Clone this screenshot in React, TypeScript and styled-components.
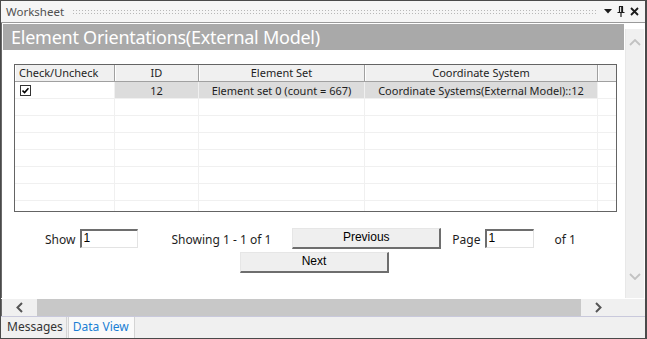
import styled, { createGlobalStyle } from 'styled-components'

const GlobalStyle = createGlobalStyle`
  html, body {
    margin: 0;
    padding: 0;
    background: #ffffff;
  }
  body {
    font-family: "Noto Sans", "Open Sans", sans-serif;
  }
`

const Frame = styled.div`
  width: 647px;
  height: 339px;
  box-sizing: border-box;
  border: 1px solid #4a4a4a;
  border-right-width: 2px;
  display: flex;
  flex-direction: column;
  background: #ffffff;
  overflow: hidden;
`

const TitleBar = styled.div`
  height: 21px;
  flex: none;
  display: flex;
  align-items: center;
  padding: 0 6px 0 5px;
  background: #f5f5f5;
  border-bottom: 1px solid #9a9a9a;
  gap: 4px;
`

const TitleText = styled.span`
  font-size: 11.5px;
  color: #505050;
`

const Dots = styled.div`
  flex: 1;
  height: 5px;
  margin: 0 2px 0 4px;
  background-image: radial-gradient(circle, #b8b8b8 0.6px, transparent 0.8px);
  background-size: 3px 3px;
`

const TitleIcons = styled.div`
  display: flex;
  align-items: center;
  gap: 5px;
  svg {
    display: block;
  }
`

const Body = styled.div`
  flex: 1;
  display: flex;
  min-height: 0;
  border-left: 1px solid #6a6a6a;
  padding-left: 1px;
`

const Main = styled.div`
  flex: 1;
  display: flex;
  flex-direction: column;
  padding-top: 1px;
`

const Banner = styled.div`
  height: 26px;
  margin-right: 1px;
  background: #a9a9a9;
  color: #ffffff;
  font-size: 18px;
  line-height: 26px;
  padding-left: 8px;
  letter-spacing: -0.25px;
`

const TableBox = styled.div`
  margin: 14px 0 0 11px;
  width: 603px;
  height: 148px;
  flex: none;
  box-sizing: border-box;
  border: 1px solid #646464;
  overflow: hidden;
`

const Row = styled.div`
  display: grid;
  grid-template-columns: 100px 84px 166px 233px 1fr;
  height: 17px;
`

const HeadCell = styled.div<{ $left?: boolean }>`
  background: #f0f0f0;
  border-right: 1px solid #a0a0a0;
  border-bottom: 1px solid #a0a0a0;
  box-shadow: inset 1px 0 0 #ffffff;
  font-size: 11px;
  line-height: 16px;
  color: #1e1e1e;
  text-align: ${(p) => (p.$left ? 'left' : 'center')};
  padding-left: ${(p) => (p.$left ? '4px' : '0')};
  white-space: nowrap;
  overflow: hidden;
  &:last-child {
    border-right: none;
  }
`

const Cell = styled.div<{ $shade?: boolean }>`
  background: ${(p) => (p.$shade ? '#dcdcdc' : '#ffffff')};
  border-right: 1px solid #f0f0f0;
  border-bottom: 1px solid #f0f0f0;
  font-size: 11px;
  line-height: 17px;
  color: #1e1e1e;
  white-space: nowrap;
  overflow: hidden;
  display: flex;
  align-items: center;
  justify-content: center;
  &:first-child {
    justify-content: flex-start;
    padding-left: 5px;
  }
  &:last-child {
    border-right: none;
  }
`

const CheckBox = styled.span`
  width: 9px;
  height: 9px;
  border: 1px solid #333333;
  background: #ffffff;
  display: inline-flex;
  align-items: center;
  justify-content: center;
`

const Pager = styled.div`
  display: flex;
  flex-direction: column;
  padding-top: 16px;
`

const PagerRow = styled.div<{ $mt?: number }>`
  display: flex;
  align-items: center;
  height: 20px;
  margin-top: ${(p) => p.$mt ?? 0}px;
`

const Label = styled.span<{ $ml: number }>`
  margin-left: ${(p) => p.$ml}px;
  font-size: 12px;
  color: #1e1e1e;
  padding-top: 3px;
`

const Field = styled.div<{ $w: number; $ml: number }>`
  width: ${(p) => p.$w}px;
  height: 19px;
  margin-left: ${(p) => p.$ml}px;
  box-sizing: border-box;
  border-top: 2px solid #6e6e6e;
  border-left: 2px solid #6e6e6e;
  border-right: 1px solid #e3e3e3;
  border-bottom: 1px solid #e3e3e3;
  font-family: "Liberation Sans", Arial, sans-serif;
  font-size: 12px;
  line-height: 15px;
  padding-left: 1px;
  color: #000000;
`

const Button = styled.div<{ $ml: number }>`
  width: 149px;
  height: 21px;
  margin-left: ${(p) => p.$ml}px;
  box-sizing: border-box;
  background: #efefef;
  border-top: 1px solid #e6e6e6;
  border-left: 1px solid #e6e6e6;
  border-right: 2px solid #6e6e6e;
  border-bottom: 2px solid #6e6e6e;
  font-family: "Liberation Sans", Arial, sans-serif;
  font-size: 12px;
  line-height: 17px;
  text-align: center;
  color: #000000;
`

const VScroll = styled.div`
  width: 18px;
  flex: none;
  margin-top: 6px;
  margin-right: 1px;
  background: #f0f0f0;
  display: flex;
  flex-direction: column;
  justify-content: space-between;
  align-items: center;
  padding: 10px 0 18px;
  border-left: 1px solid #e8e8e8;
`

const HScroll = styled.div`
  height: 17px;
  flex: none;
  display: flex;
  align-items: center;
  background: #f0f0f0;
  border-left: 1px solid #6a6a6a;
  margin-top: 1px;
`

const Arrow = styled.div`
  width: 35px;
  display: flex;
  justify-content: center;
  align-items: center;
  height: 100%;
`

const Thumb = styled.div`
  width: 544px;
  height: 100%;
  background: #c8c8c8;
`

const Tabs = styled.div`
  height: 21px;
  flex: none;
  display: flex;
  align-items: stretch;
  background: #f0f0f0;
  border-top: 1px solid #c9c9dc;
`

const Tab = styled.div<{ $active?: boolean }>`
  padding: 0 ${(p) => (p.$active ? '5px' : '3px')} 0 ${(p) => (p.$active ? '4px' : '6px')};
  font-size: 12px;
  line-height: 20px;
  color: ${(p) => (p.$active ? '#1a7fd4' : '#333333')};
  background: ${(p) => (p.$active ? '#fafafa' : 'transparent')};
  border-right: 1px solid #d4d4d4;
  border-left: ${(p) => (p.$active ? '1px solid #d4d4d4' : 'none')};
  margin-left: ${(p) => (p.$active ? '1px' : '0')};
`

const rows = 8

export default function App() {
  return (
    <>
      <GlobalStyle />
      <Frame>
        <TitleBar>
          <TitleText>Worksheet</TitleText>
          <Dots />
          <TitleIcons>
            <svg width="8" height="5" viewBox="0 0 8 5">
              <path d="M0 0 H8 L4 4.5 Z" fill="#1b1b1b" />
            </svg>
            <svg width="8" height="11" viewBox="0 0 8 11">
              <path d="M2 0.5 H6 M2.5 0.5 V6 M5.5 0.5 V6 M0.5 6.5 H7.5 M4 6.5 V11" stroke="#1b1b1b" strokeWidth="1.2" fill="none" />
              <rect x="4.2" y="0.5" width="1.6" height="5.5" fill="#1b1b1b" />
            </svg>
            <svg width="9" height="9" viewBox="0 0 9 9">
              <path d="M1 1 L8 8 M8 1 L1 8" stroke="#1b1b1b" strokeWidth="1.8" />
            </svg>
          </TitleIcons>
        </TitleBar>
        <Body>
          <Main>
            <Banner>Element Orientations(External Model)</Banner>
            <TableBox>
              <Row>
                <HeadCell $left>Check/Uncheck</HeadCell>
                <HeadCell>ID</HeadCell>
                <HeadCell>Element Set</HeadCell>
                <HeadCell>Coordinate System</HeadCell>
                <HeadCell />
              </Row>
              <Row>
                <Cell>
                  <CheckBox>
                    <svg width="7" height="7" viewBox="0 0 7 7">
                      <path d="M0.5 3.5 L2.6 5.6 L6.5 1.2" stroke="#000" strokeWidth="1.6" fill="none" />
                    </svg>
                  </CheckBox>
                </Cell>
                <Cell $shade>12</Cell>
                <Cell $shade>Element set 0 (count = 667)</Cell>
                <Cell $shade>Coordinate Systems(External Model)::12</Cell>
                <Cell />
              </Row>
              {Array.from({ length: rows - 1 }).map((_, i) => (
                <Row key={i}>
                  <Cell />
                  <Cell />
                  <Cell />
                  <Cell />
                  <Cell />
                </Row>
              ))}
            </TableBox>
            <Pager>
              <PagerRow>
                <Label $ml={42}>Show</Label>
                <Field $w={58} $ml={5}>1</Field>
                <Label $ml={33}>Showing 1 - 1 of 1</Label>
                <Button $ml={21}>Previous</Button>
                <Label $ml={11}>Page</Label>
                <Field $w={49} $ml={5}>1</Field>
                <Label $ml={20}>of 1</Label>
              </PagerRow>
              <PagerRow $mt={4}>
                <Button $ml={237}>Next</Button>
              </PagerRow>
            </Pager>
          </Main>
          <VScroll>
            <svg width="12" height="7" viewBox="0 0 12 7">
              <path d="M1 6 L6 1 L11 6" stroke="#c2c2c2" strokeWidth="1.8" fill="none" />
            </svg>
            <svg width="12" height="7" viewBox="0 0 12 7">
              <path d="M1 1 L6 6 L11 1" stroke="#c2c2c2" strokeWidth="1.8" fill="none" />
            </svg>
          </VScroll>
        </Body>
        <HScroll>
          <Arrow>
            <svg width="7" height="11" viewBox="0 0 7 11">
              <path d="M6 1 L1.5 5.5 L6 10" stroke="#555" strokeWidth="2" fill="none" />
            </svg>
          </Arrow>
          <Thumb />
          <Arrow>
            <svg width="7" height="11" viewBox="0 0 7 11">
              <path d="M1 1 L5.5 5.5 L1 10" stroke="#555" strokeWidth="2" fill="none" />
            </svg>
          </Arrow>
        </HScroll>
        <Tabs>
          <Tab>Messages</Tab>
          <Tab $active>Data View</Tab>
        </Tabs>
      </Frame>
    </>
  )
}
